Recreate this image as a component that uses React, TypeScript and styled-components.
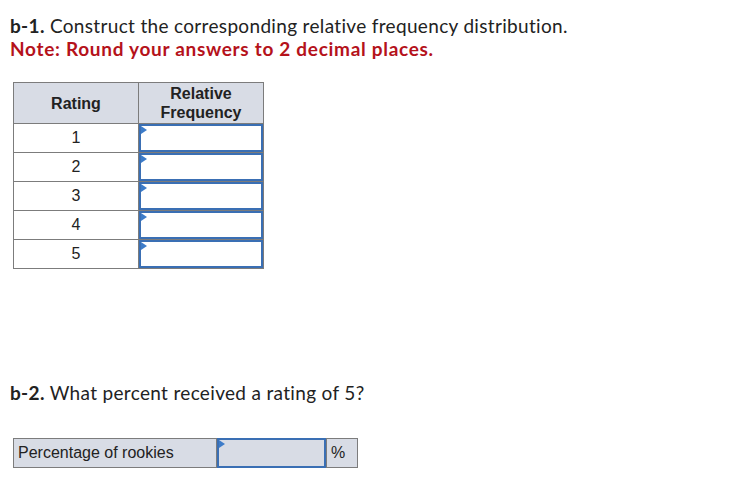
import React from 'react';
import styled, { createGlobalStyle } from 'styled-components';

const Global = createGlobalStyle`
  body {
    margin: 0;
    background: #fff;
  }
`;

const Page = styled.div`
  width: 750px;
  height: 495px;
  padding: 14px 0 0 10px;
  box-sizing: border-box;
  font-family: Lato, 'Liberation Sans', sans-serif;
  color: #222;
`;

const Question = styled.p`
  margin: 0;
  font-size: 19px;
  line-height: 23px;
  letter-spacing: 0.33px;
  b {
    font-weight: 700;
  }
`;

const Note = styled.p`
  margin: 0;
  font-size: 19px;
  line-height: 23px;
  font-weight: 700;
  letter-spacing: 0.7px;
  color: #b5121b;
`;

const Table = styled.table`
  margin: 22px 0 0 3px;
  border-collapse: collapse;
  font-family: 'Liberation Sans', Arial, sans-serif;
  font-size: 16px;
  color: #222;
`;

const Th = styled.th<{ $w: number }>`
  width: ${(p) => p.$w}px;
  height: 40px;
  padding: 0;
  background: #d8dce5;
  border: 1px solid #7c7c7c;
  font-weight: 700;
  font-size: 16px;
  line-height: 19px;
`;

const Td = styled.td`
  height: 28px;
  padding: 0;
  border: 1px solid #7c7c7c;
  text-align: center;
  vertical-align: middle;
  line-height: 18px;
`;

const InputTd = styled.td`
  height: 28px;
  padding: 0;
  border: 1px solid #7c7c7c;
`;

const Input = styled.div<{ $bg?: string }>`
  position: relative;
  box-sizing: border-box;
  height: 100%;
  min-height: 28px;
  border: 2px solid #3a6fb4;
  background: ${(p) => p.$bg || '#fff'};
  &::before {
    content: '';
    position: absolute;
    left: 0;
    top: 0;
    border-left: 6px solid #3d7cc9;
    border-top: 4px solid transparent;
    border-bottom: 4px solid transparent;
  }
`;

const Part2 = styled(Question)`
  margin-top: 112px;
`;

const AnswerRow = styled.div`
  display: flex;
  margin: 34px 0 0 3px;
  height: 30px;
  font-family: 'Liberation Sans', Arial, sans-serif;
  font-size: 16px;
  color: #222;
`;

const Cell = styled.div<{ $w: number }>`
  width: ${(p) => p.$w}px;
  box-sizing: border-box;
  display: flex;
  align-items: center;
  padding-left: 4px;
  background: #d8dce5;
  border: 1px solid #7c7c7c;
`;

const AnswerInput = styled(Input)`
  width: 109px;
  height: 30px;
`;

const ratings = [1, 2, 3, 4, 5];

export default function App() {
  return (
    <Page>
      <Global />
      <Question>
        <b>b-1.</b> Construct the corresponding relative frequency distribution.
      </Question>
      <Note>Note: Round your answers to 2 decimal places.</Note>
      <Table>
        <thead>
          <tr>
            <Th $w={124}>Rating</Th>
            <Th $w={124}>
              Relative
              <br />
              Frequency
            </Th>
          </tr>
        </thead>
        <tbody>
          {ratings.map((r) => (
            <tr key={r}>
              <Td>{r}</Td>
              <InputTd>
                <Input />
              </InputTd>
            </tr>
          ))}
        </tbody>
      </Table>
      <Part2>
        <b>b-2.</b> What percent received a rating of 5?
      </Part2>
      <AnswerRow>
        <Cell $w={204}>Percentage of rookies</Cell>
        <AnswerInput $bg="#d8dce5" />
        <Cell $w={32}>%</Cell>
      </AnswerRow>
    </Page>
  );
}
